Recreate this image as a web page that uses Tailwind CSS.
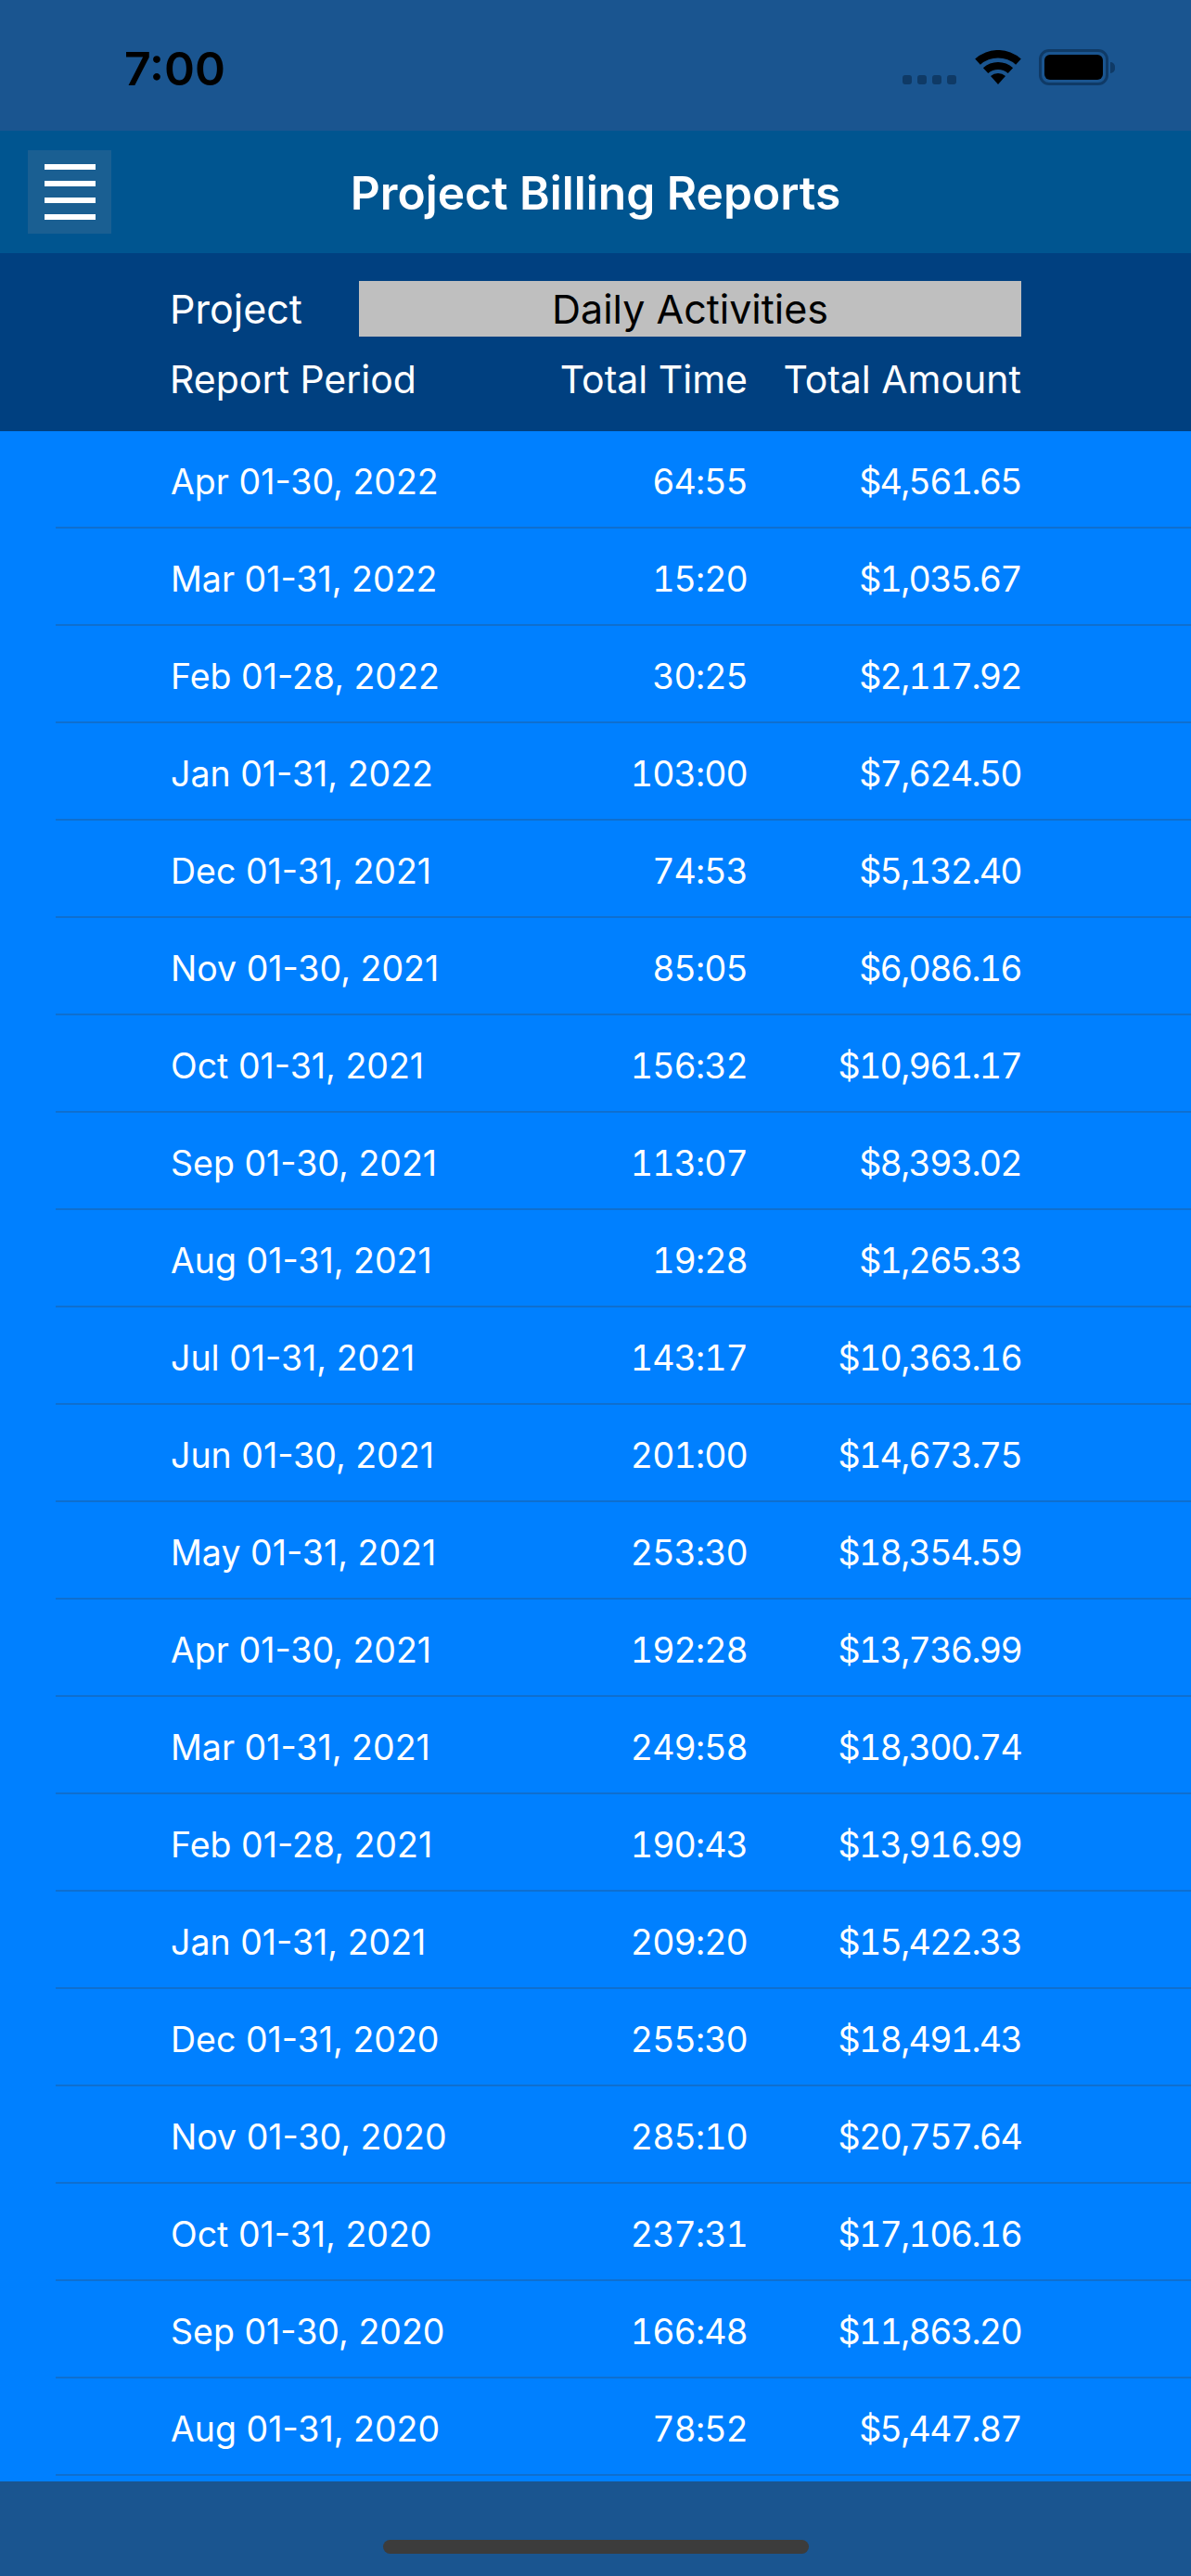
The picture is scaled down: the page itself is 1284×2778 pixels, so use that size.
<!DOCTYPE html>
<html lang="en">
<head>
  <meta charset="UTF-8" />
  <meta name="viewport" content="width=device-width, initial-scale=1.0" />
  <title>Project Billing Reports</title>
  <script src="https://cdn.jsdelivr.net/npm/@tailwindcss/browser@4"></script>
</head>
<body class="bg-[#1a5590] font-['Inter',sans-serif] text-white">
  <div class="w-[1284px] h-[2778px] flex flex-col overflow-hidden">
    <!-- Status bar -->
    <div class="h-[141px] shrink-0 flex items-start justify-between pl-[134px] pr-[82px] pt-[53px]">
      <div class="text-[50px] leading-[36px] mt-[3px] font-semibold text-black">7:00</div>
      <div class="flex items-start">
        <div class="flex gap-[6px] mt-[28px] mr-[20px]">
          <span class="w-[10px] h-[10px] rounded-[3px] bg-[#0f3a66]"></span>
          <span class="w-[10px] h-[10px] rounded-[3px] bg-[#0f3a66]"></span>
          <span class="w-[10px] h-[10px] rounded-[3px] bg-[#0f3a66]"></span>
          <span class="w-[10px] h-[10px] rounded-[3px] bg-[#0f3a66]"></span>
        </div>
        <svg width="50" height="37" viewBox="0 0 50 37" class="block mt-[1px] mr-[19px]">
          <path d="M25 37 L17 28.1 A12 12 0 0 1 33 28.1 Z" fill="#000"/>
          <path d="M8.9 19.2 A24 24 0 0 1 41.1 19.2 L35.7 25.1 A16 16 0 0 0 14.3 25.1 Z" fill="#000"/>
          <path d="M0.2 9.5 A37 37 0 0 1 49.8 9.5 L44.1 15.8 A28.5 28.5 0 0 0 5.9 15.8 Z" fill="#000"/>
        </svg>
        <div class="flex items-center">
          <div class="w-[75px] h-[39px] rounded-[11px] border-[3px] border-[#0f3a66] p-[3px]">
            <div class="w-full h-full rounded-[6px] bg-black"></div>
          </div>
          <div class="w-[5px] h-[12px] rounded-r-full bg-[#0f3a66] ml-[2px]"></div>
        </div>
      </div>
    </div>
    <!-- Nav bar -->
    <div class="relative h-[132px] shrink-0 bg-[#005590] flex items-center justify-center">
      <button class="absolute left-[30px] top-[21px] w-[90px] h-[90px] bg-[#1a5f92] flex flex-col items-center justify-center gap-[12px]">
        <span class="w-[55px] h-[6px] bg-white"></span>
        <span class="w-[55px] h-[6px] bg-white"></span>
        <span class="w-[55px] h-[6px] bg-white"></span>
        <span class="w-[55px] h-[6px] bg-white"></span>
      </button>
      <h1 class="text-[49.7px] font-semibold leading-none pt-[4px]">Project Billing Reports</h1>
    </div>
    <!-- Sub header -->
    <div class="h-[192px] shrink-0 bg-[#004080] pl-[183px] pr-[183px] pt-[30px]">
      <div class="flex items-center h-[60px] text-[43px]">
        <div class="w-[204px] leading-none">Project</div>
        <div class="flex-1 h-[60px] bg-[#bfbfbf] text-black text-center leading-[60px]">Daily Activities</div>
      </div>
      <div class="flex items-center h-[92px] text-[41px]">
        <div class="flex-1 leading-none">Report Period</div>
        <div class="leading-none">Total Time</div>
        <div class="w-[295px] text-right leading-none">Total Amount</div>
      </div>
    </div>
    <!-- Report rows -->
    <div class="h-[2211px] shrink-0 bg-[#0080ff] text-[37.5px]">
      <div class="ml-[60px] h-[105px] pl-[124px] pr-[183px] pt-[8px] flex items-center border-b-2 border-[#0f6fcf]"><div class="flex-1">Apr 01-30, 2022</div><div class="tabular-nums tracking-[-0.9px]">64:55</div><div class="w-[295px] text-right tabular-nums tracking-[-1.7px]">$4,561.65</div></div>
      <div class="ml-[60px] h-[105px] pl-[124px] pr-[183px] pt-[8px] flex items-center border-b-2 border-[#0f6fcf]"><div class="flex-1">Mar 01-31, 2022</div><div class="tabular-nums tracking-[-0.9px]">15:20</div><div class="w-[295px] text-right tabular-nums tracking-[-1.7px]">$1,035.67</div></div>
      <div class="ml-[60px] h-[105px] pl-[124px] pr-[183px] pt-[8px] flex items-center border-b-2 border-[#0f6fcf]"><div class="flex-1">Feb 01-28, 2022</div><div class="tabular-nums tracking-[-0.9px]">30:25</div><div class="w-[295px] text-right tabular-nums tracking-[-1.7px]">$2,117.92</div></div>
      <div class="ml-[60px] h-[105px] pl-[124px] pr-[183px] pt-[8px] flex items-center border-b-2 border-[#0f6fcf]"><div class="flex-1">Jan 01-31, 2022</div><div class="tabular-nums tracking-[-0.9px]">103:00</div><div class="w-[295px] text-right tabular-nums tracking-[-1.7px]">$7,624.50</div></div>
      <div class="ml-[60px] h-[105px] pl-[124px] pr-[183px] pt-[8px] flex items-center border-b-2 border-[#0f6fcf]"><div class="flex-1">Dec 01-31, 2021</div><div class="tabular-nums tracking-[-0.9px]">74:53</div><div class="w-[295px] text-right tabular-nums tracking-[-1.7px]">$5,132.40</div></div>
      <div class="ml-[60px] h-[105px] pl-[124px] pr-[183px] pt-[8px] flex items-center border-b-2 border-[#0f6fcf]"><div class="flex-1">Nov 01-30, 2021</div><div class="tabular-nums tracking-[-0.9px]">85:05</div><div class="w-[295px] text-right tabular-nums tracking-[-1.7px]">$6,086.16</div></div>
      <div class="ml-[60px] h-[105px] pl-[124px] pr-[183px] pt-[8px] flex items-center border-b-2 border-[#0f6fcf]"><div class="flex-1">Oct 01-31, 2021</div><div class="tabular-nums tracking-[-0.9px]">156:32</div><div class="w-[295px] text-right tabular-nums tracking-[-1.7px]">$10,961.17</div></div>
      <div class="ml-[60px] h-[105px] pl-[124px] pr-[183px] pt-[8px] flex items-center border-b-2 border-[#0f6fcf]"><div class="flex-1">Sep 01-30, 2021</div><div class="tabular-nums tracking-[-0.9px]">113:07</div><div class="w-[295px] text-right tabular-nums tracking-[-1.7px]">$8,393.02</div></div>
      <div class="ml-[60px] h-[105px] pl-[124px] pr-[183px] pt-[8px] flex items-center border-b-2 border-[#0f6fcf]"><div class="flex-1">Aug 01-31, 2021</div><div class="tabular-nums tracking-[-0.9px]">19:28</div><div class="w-[295px] text-right tabular-nums tracking-[-1.7px]">$1,265.33</div></div>
      <div class="ml-[60px] h-[105px] pl-[124px] pr-[183px] pt-[8px] flex items-center border-b-2 border-[#0f6fcf]"><div class="flex-1">Jul 01-31, 2021</div><div class="tabular-nums tracking-[-0.9px]">143:17</div><div class="w-[295px] text-right tabular-nums tracking-[-1.7px]">$10,363.16</div></div>
      <div class="ml-[60px] h-[105px] pl-[124px] pr-[183px] pt-[8px] flex items-center border-b-2 border-[#0f6fcf]"><div class="flex-1">Jun 01-30, 2021</div><div class="tabular-nums tracking-[-0.9px]">201:00</div><div class="w-[295px] text-right tabular-nums tracking-[-1.7px]">$14,673.75</div></div>
      <div class="ml-[60px] h-[105px] pl-[124px] pr-[183px] pt-[8px] flex items-center border-b-2 border-[#0f6fcf]"><div class="flex-1">May 01-31, 2021</div><div class="tabular-nums tracking-[-0.9px]">253:30</div><div class="w-[295px] text-right tabular-nums tracking-[-1.7px]">$18,354.59</div></div>
      <div class="ml-[60px] h-[105px] pl-[124px] pr-[183px] pt-[8px] flex items-center border-b-2 border-[#0f6fcf]"><div class="flex-1">Apr 01-30, 2021</div><div class="tabular-nums tracking-[-0.9px]">192:28</div><div class="w-[295px] text-right tabular-nums tracking-[-1.7px]">$13,736.99</div></div>
      <div class="ml-[60px] h-[105px] pl-[124px] pr-[183px] pt-[8px] flex items-center border-b-2 border-[#0f6fcf]"><div class="flex-1">Mar 01-31, 2021</div><div class="tabular-nums tracking-[-0.9px]">249:58</div><div class="w-[295px] text-right tabular-nums tracking-[-1.7px]">$18,300.74</div></div>
      <div class="ml-[60px] h-[105px] pl-[124px] pr-[183px] pt-[8px] flex items-center border-b-2 border-[#0f6fcf]"><div class="flex-1">Feb 01-28, 2021</div><div class="tabular-nums tracking-[-0.9px]">190:43</div><div class="w-[295px] text-right tabular-nums tracking-[-1.7px]">$13,916.99</div></div>
      <div class="ml-[60px] h-[105px] pl-[124px] pr-[183px] pt-[8px] flex items-center border-b-2 border-[#0f6fcf]"><div class="flex-1">Jan 01-31, 2021</div><div class="tabular-nums tracking-[-0.9px]">209:20</div><div class="w-[295px] text-right tabular-nums tracking-[-1.7px]">$15,422.33</div></div>
      <div class="ml-[60px] h-[105px] pl-[124px] pr-[183px] pt-[8px] flex items-center border-b-2 border-[#0f6fcf]"><div class="flex-1">Dec 01-31, 2020</div><div class="tabular-nums tracking-[-0.9px]">255:30</div><div class="w-[295px] text-right tabular-nums tracking-[-1.7px]">$18,491.43</div></div>
      <div class="ml-[60px] h-[105px] pl-[124px] pr-[183px] pt-[8px] flex items-center border-b-2 border-[#0f6fcf]"><div class="flex-1">Nov 01-30, 2020</div><div class="tabular-nums tracking-[-0.9px]">285:10</div><div class="w-[295px] text-right tabular-nums tracking-[-1.7px]">$20,757.64</div></div>
      <div class="ml-[60px] h-[105px] pl-[124px] pr-[183px] pt-[8px] flex items-center border-b-2 border-[#0f6fcf]"><div class="flex-1">Oct 01-31, 2020</div><div class="tabular-nums tracking-[-0.9px]">237:31</div><div class="w-[295px] text-right tabular-nums tracking-[-1.7px]">$17,106.16</div></div>
      <div class="ml-[60px] h-[105px] pl-[124px] pr-[183px] pt-[8px] flex items-center border-b-2 border-[#0f6fcf]"><div class="flex-1">Sep 01-30, 2020</div><div class="tabular-nums tracking-[-0.9px]">166:48</div><div class="w-[295px] text-right tabular-nums tracking-[-1.7px]">$11,863.20</div></div>
      <div class="ml-[60px] h-[105px] pl-[124px] pr-[183px] pt-[8px] flex items-center border-b-2 border-[#0f6fcf]"><div class="flex-1">Aug 01-31, 2020</div><div class="tabular-nums tracking-[-0.9px]">78:52</div><div class="w-[295px] text-right tabular-nums tracking-[-1.7px]">$5,447.87</div></div>
    </div>
    <!-- Home indicator -->
    <div class="flex-1 flex justify-center pt-[63px]">
      <div class="w-[459px] h-[15px] rounded-full bg-[#3c3c3c]"></div>
    </div>
  </div>
</body>
</html>
